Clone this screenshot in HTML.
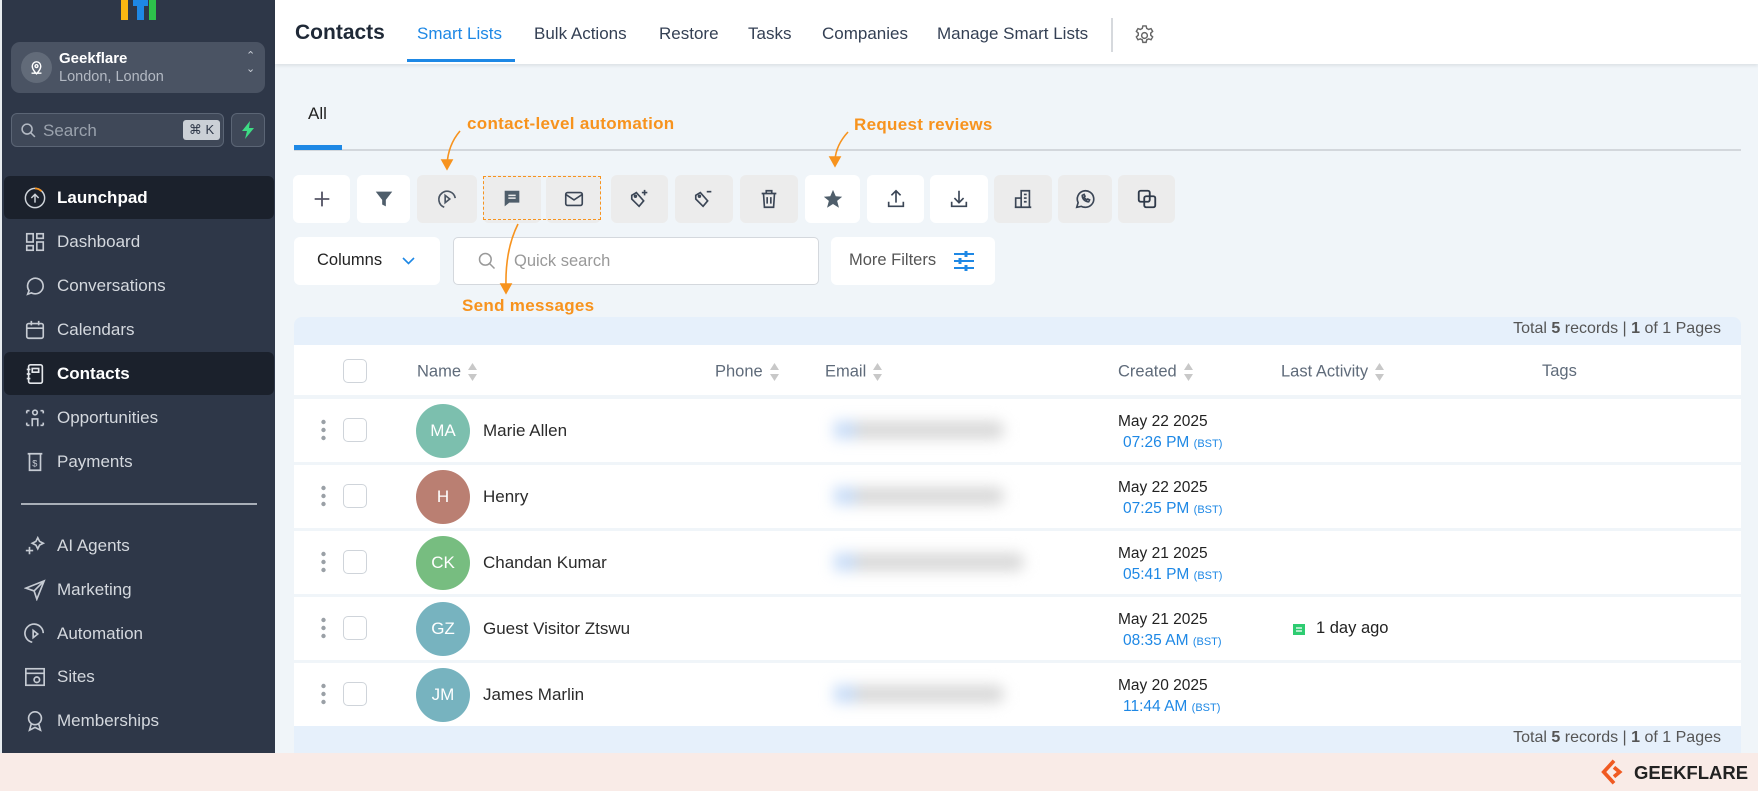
<!DOCTYPE html>
<html><head><meta charset="utf-8"><style>
*{box-sizing:border-box;margin:0;padding:0}
body{width:1758px;height:791px;overflow:hidden;background:#f0f5f9;font-family:"Liberation Sans",sans-serif;position:relative}
.a{position:absolute}
.sb{left:0;top:0;width:275px;height:753px;background:#2e3748;border-left:2px solid #e8ecf0}
.nav{position:absolute;left:2px;width:270px;height:43px;display:flex;align-items:center;color:#d4d8de;font-size:17px}
.nav svg{position:absolute;left:20px;width:22px;height:22px}
.nav span{position:absolute;left:53px}
.nav.act{background:#1b212c;border-radius:6px;color:#fff}
.hdr{left:275px;top:0;width:1483px;height:64px;background:#fff;box-shadow:0 2px 3px rgba(0,0,0,.08)}
.tab{position:absolute;top:24px;font-size:17px;color:#344054}
.btn{position:absolute;top:175px;height:48px;border-radius:6px;background:#ececec;display:flex;align-items:center;justify-content:center}
.btn.w{background:#fff}
.btn svg{width:22px;height:22px}
.ann{position:absolute;color:#f7931e;font-weight:bold;font-size:17px;letter-spacing:.3px}
.row{position:absolute;left:294px;width:1447px;height:63px;background:#fff}
.row .dots{position:absolute;left:27px;top:20px;width:5px;height:22px}
.cb{position:absolute;width:24px;height:24px;border:1.5px solid #cfd4da;border-radius:5px;background:#fff}
.av{position:absolute;left:122px;top:5px;width:54px;height:54px;border-radius:50%;color:#fff;font-size:17px;display:flex;align-items:center;justify-content:center}
.nm{position:absolute;left:189px;top:22px;font-size:17px;color:#2b2b2b}
.em{position:absolute;left:540px;top:22px;width:170px;height:18px;background:#d8d8d8;filter:blur(7px);border-radius:8px}
.em:before{content:"";position:absolute;left:0;top:0;width:22px;height:18px;background:#c8dcf7}
.dt{position:absolute;left:824px;top:12px;font-size:15.5px;color:#222;line-height:21px}
.dt b{font-weight:normal;color:#1e88e5;padding-left:5px}
.dt i{font-style:normal;font-size:11px;color:#1e88e5}
.th{position:absolute;top:362px;font-size:16.5px;color:#5f6b7a}
.sort{display:inline-block;vertical-align:middle;margin-left:6px;width:11px;height:20px}
</style></head><body>

<div class="a sb">
 <div class="a" style="left:119px;top:0;width:7px;height:20px;background:#f9b712"></div>
 <div class="a" style="left:131px;top:0;width:15px;height:6px;background:#1e88e5"></div>
 <div class="a" style="left:135px;top:0;width:7px;height:20px;background:#1e88e5"></div>
 <div class="a" style="left:147px;top:0;width:7px;height:20px;background:#2dc24b"></div>
 <div class="a" style="left:9px;top:42px;width:254px;height:51px;background:#4a5363;border-radius:9px">
  <div class="a" style="left:10px;top:10px;width:31px;height:31px;border-radius:50%;background:#626b79"></div>
  <svg class="a" style="left:17px;top:17px" width="17" height="17" viewBox="0 0 24 24" fill="none" stroke="#fff" stroke-width="2"><path d="M12 21s-6-6-6-11a6 6 0 0112 0c0 5-6 11-6 11z"/><circle cx="12" cy="10" r="2"/><path d="M5 20h14"/></svg>
  <div class="a" style="left:48px;top:8px;color:#fff;font-size:15px;font-weight:bold">Geekflare</div>
  <div class="a" style="left:48px;top:27px;color:#b3b9c3;font-size:14.5px">London, London</div>
  <div class="a" style="left:235px;top:8px;color:#c9ced6;font-size:11px;line-height:13px">&#8963;<br>&#8964;</div>
 </div>
 <div class="a" style="left:9px;top:113px;width:213px;height:34px;background:#3f4858;border:1px solid #5b6575;border-radius:6px">
  <svg class="a" style="left:8px;top:8px" width="17" height="17" viewBox="0 0 24 24" fill="none" stroke="#b3b9c3" stroke-width="2.2"><circle cx="10" cy="10" r="7"/><path d="M15 15l6 6"/></svg>
  <div class="a" style="left:31px;top:7px;color:#9aa2ad;font-size:17px">Search</div>
  <div class="a" style="left:171px;top:6px;width:37px;height:20px;background:#cbd0d6;border-radius:3px;color:#2e3748;font-size:13px;text-align:center;line-height:20px">⌘ K</div>
 </div>
 <div class="a" style="left:229px;top:113px;width:34px;height:34px;background:#3f4858;border:1px solid #5b6575;border-radius:6px">
  <svg class="a" style="left:8px;top:7px" width="16" height="18" viewBox="0 0 16 18"><path d="M10 0L2 10h5l-2 8 9-11H9z" fill="#3ddc84"/></svg>
 </div>
 <div class="nav act" style="top:176px"><svg viewBox="0 0 24 24" fill="none" stroke="#cfd4da" stroke-width="1.6"><circle cx="12" cy="12" r="10.5"/><path d="M12 1.5a10.5 10.5 0 017 3" stroke="#f7931e" stroke-width="2"/><path d="M12 17v-8M8 12l4-4 4 4"/></svg><span style="font-weight:bold">Launchpad</span></div>
 <div class="nav" style="top:220px"><svg viewBox="0 0 24 24" fill="none" stroke="#c6cbd3" stroke-width="1.8"><rect x="3" y="3" width="7" height="9"/><rect x="14" y="3" width="7" height="5"/><rect x="14" y="12" width="7" height="9"/><rect x="3" y="16" width="7" height="5"/></svg><span>Dashboard</span></div>
 <div class="nav" style="top:264px"><svg viewBox="0 0 24 24" fill="none" stroke="#c6cbd3" stroke-width="1.8"><path d="M4 21l1.5-4A8.5 8.5 0 1112 20.5a8.5 8.5 0 01-4-1z"/></svg><span>Conversations</span></div>
 <div class="nav" style="top:308px"><svg viewBox="0 0 24 24" fill="none" stroke="#c6cbd3" stroke-width="1.8"><rect x="3" y="5" width="18" height="16" rx="2"/><path d="M3 10h18M8 2v5M16 2v5"/></svg><span>Calendars</span></div>
 <div class="nav act" style="top:352px"><svg viewBox="0 0 24 24" fill="none" stroke="#e4e7eb" stroke-width="1.8"><rect x="5" y="2" width="15" height="20" rx="2"/><rect x="9" y="6" width="7" height="4"/><path d="M3 7h4M3 12h4M3 17h4"/></svg><span style="font-weight:bold">Contacts</span></div>
 <div class="nav" style="top:396px"><svg viewBox="0 0 24 24" fill="none" stroke="#c6cbd3" stroke-width="1.8"><circle cx="12" cy="6" r="2.5"/><path d="M9 21v-8h6v8M3 4h3M3 4v3M21 4h-3M21 4v3M3 20h3M3 20v-3M21 20h-3M21 20v-3"/></svg><span>Opportunities</span></div>
 <div class="nav" style="top:440px"><svg viewBox="0 0 24 24" fill="none" stroke="#c6cbd3" stroke-width="1.8"><path d="M4 3h16M6 3v18h12V3"/><text x="9" y="17" font-size="10" fill="#c6cbd3" stroke="none">$</text></svg><span>Payments</span></div>
 <div class="a" style="left:19px;top:503px;width:236px;height:1.5px;background:#a9afb8"></div>
 <div class="nav" style="top:524px"><svg viewBox="0 0 24 24" fill="none" stroke="#c6cbd3" stroke-width="1.8"><path d="M2 17h8M6 13v8M15 3l2 4 4 2-4 2-2 4-2-4-4-2 4-2z"/></svg><span>AI Agents</span></div>
 <div class="nav" style="top:568px"><svg viewBox="0 0 24 24" fill="none" stroke="#c6cbd3" stroke-width="1.8"><path d="M22 2L2 10l9 3 3 9z M11 13L22 2"/></svg><span>Marketing</span></div>
 <div class="nav" style="top:612px"><svg viewBox="0 0 24 24" fill="none" stroke="#c6cbd3" stroke-width="1.8"><path d="M9 21A10 10 0 1121 11"/><path d="M10 8l5 4-5 4z"/></svg><span>Automation</span></div>
 <div class="nav" style="top:655px"><svg viewBox="0 0 24 24" fill="none" stroke="#c6cbd3" stroke-width="1.8"><rect x="2" y="3" width="20" height="18"/><path d="M2 8h20"/><circle cx="14" cy="15" r="3"/></svg><span>Sites</span></div>
 <div class="nav" style="top:699px"><svg viewBox="0 0 24 24" fill="none" stroke="#c6cbd3" stroke-width="1.8"><circle cx="12" cy="9" r="7"/><path d="M8 15l-2 7 6-3 6 3-2-7"/></svg><span>Memberships</span></div>
</div>

<div class="a hdr">
 <div class="a" style="left:20px;top:21px;font-size:21px;color:#1f2937;font-weight:bold">Contacts</div>
 <div class="tab" style="left:142px;color:#1e88e5">Smart Lists</div>
 <div class="a" style="left:132px;top:59px;width:108px;height:3px;background:#1e88e5"></div>
 <div class="tab" style="left:259px">Bulk Actions</div>
 <div class="tab" style="left:384px">Restore</div>
 <div class="tab" style="left:473px">Tasks</div>
 <div class="tab" style="left:547px">Companies</div>
 <div class="tab" style="left:662px">Manage Smart Lists</div>
 <div class="a" style="left:836px;top:18px;width:2px;height:34px;background:#d6d9dd"></div>
 <svg class="a" style="left:858px;top:24px" width="23" height="23" viewBox="0 0 24 24" fill="none" stroke="#666" stroke-width="1.5"><circle cx="12" cy="12" r="3"/><path d="M10.3 2h3.4l.6 2.6 2 1.1 2.5-.9 1.7 2.9-2 1.8v2.2l2 1.8-1.7 2.9-2.5-.9-2 1.1-.6 2.6h-3.4l-.6-2.6-2-1.1-2.5.9-1.7-2.9 2-1.8V9.5l-2-1.8L5.2 4.8l2.5.9 2-1.1z"/></svg>
</div>

<div class="a" style="left:308px;top:104px;font-size:17px;color:#222">All</div>
<div class="a" style="left:294px;top:149px;width:1447px;height:1.5px;background:#d3d7dc"></div>
<div class="a" style="left:294px;top:145px;width:48px;height:5px;background:#1e88e5"></div>

<div class="btn w" style="left:293px;width:57px"><svg viewBox="0 0 24 24" fill="none" stroke="#556" stroke-width="2"><path d="M12 4v16M4 12h16"/></svg></div>
<div class="btn w" style="left:357px;width:53px"><svg viewBox="0 0 24 24"><path d="M3 4h18l-7 9v7l-4-2v-5z" fill="#4f5e6b"/></svg></div>
<div class="btn" style="left:417px;width:60px"><svg viewBox="0 0 24 24" fill="none" stroke="#4a5563" stroke-width="1.8"><path d="M9 21A9 9 0 1121 11"/><path d="M10 8l5 4-5 4z"/></svg></div>
<div class="btn" style="left:483px;width:58px"><svg viewBox="0 0 24 24"><path d="M4 3h16v13H9l-5 4z" fill="#4f5e6b"/><path d="M8 8h8M8 11h8" stroke="#ececec" stroke-width="1.6"/></svg></div>
<div class="btn" style="left:546px;width:55px"><svg viewBox="0 0 24 24" fill="none" stroke="#3b4656" stroke-width="1.8"><rect x="3" y="5" width="18" height="14" rx="2"/><path d="M3 7l9 6 9-6"/></svg></div>
<div class="a" style="left:483px;top:176px;width:118px;height:44px;border:1.5px dashed #f7931e"></div>
<div class="btn" style="left:611px;width:57px"><svg viewBox="0 0 24 24" fill="none" stroke="#3b4656" stroke-width="1.8"><path d="M3 8l5-3 8 9-5 6-8-8z"/><circle cx="7" cy="9" r="1"/><path d="M17 2v6M14 5h6"/></svg></div>
<div class="btn" style="left:675px;width:58px"><svg viewBox="0 0 24 24" fill="none" stroke="#3b4656" stroke-width="1.8"><path d="M3 8l5-3 8 9-5 6-8-8z"/><circle cx="7" cy="9" r="1"/><path d="M15 4h5"/></svg></div>
<div class="btn" style="left:740px;width:58px"><svg viewBox="0 0 24 24" fill="none" stroke="#3b4656" stroke-width="1.8"><path d="M4 6h16M9 6V3h6v3M6 6l1 15h10l1-15M10 10v7M14 10v7"/></svg></div>
<div class="btn w" style="left:805px;width:55px"><svg viewBox="0 0 24 24"><path d="M12 2l3 7 7 .5-5.5 4.5 2 7.5-6.5-4-6.5 4 2-7.5L2 9.5 9 9z" fill="#4f5e6b"/></svg></div>
<div class="btn w" style="left:867px;width:57px"><svg viewBox="0 0 24 24" fill="none" stroke="#3b4656" stroke-width="1.8"><path d="M12 16V3M7 8l5-5 5 5M4 15v5h16v-5"/></svg></div>
<div class="btn w" style="left:930px;width:58px"><svg viewBox="0 0 24 24" fill="none" stroke="#3b4656" stroke-width="1.8"><path d="M12 3v13M7 11l5 5 5-5M4 15v5h16v-5"/></svg></div>
<div class="btn" style="left:994px;width:58px"><svg viewBox="0 0 24 24" fill="none" stroke="#3b4656" stroke-width="1.8"><path d="M3 21h18M4 21V11h6M10 21V3h9v18M13 7h3M13 11h3M13 15h3"/></svg></div>
<div class="btn" style="left:1058px;width:54px"><svg viewBox="0 0 24 24" fill="none" stroke="#3b4656" stroke-width="1.8"><path d="M3 21l1.5-5A9 9 0 1112 21a9 9 0 01-4-1z"/><path d="M9 8c0 4 3 7 7 7l1-2-2-1-1 1c-1-.5-2.5-2-3-3l1-1-1-2z"/></svg></div>
<div class="btn" style="left:1118px;width:57px"><svg viewBox="0 0 24 24" fill="none" stroke="#2f3a4a" stroke-width="2"><rect x="3" y="3" width="12" height="12" rx="2"/><rect x="9" y="9" width="12" height="12" rx="2"/></svg></div>

<div class="a" style="left:294px;top:237px;width:146px;height:48px;background:#fff;border-radius:6px">
 <div class="a" style="left:23px;top:14px;font-size:16.5px;color:#222">Columns</div>
 <svg class="a" style="left:108px;top:19px" width="13" height="10" viewBox="0 0 13 10" fill="none" stroke="#1e88e5" stroke-width="1.6"><path d="M1 2l5.5 5.5L12 2"/></svg>
</div>
<div class="a" style="left:453px;top:237px;width:366px;height:48px;background:#fff;border:1.5px solid #d4d8dd;border-radius:5px">
 <svg class="a" style="left:23px;top:13px" width="20" height="20" viewBox="0 0 24 24" fill="none" stroke="#999" stroke-width="1.8"><circle cx="10" cy="10" r="7"/><path d="M15 15l6 6"/></svg>
 <div class="a" style="left:60px;top:14px;font-size:16.5px;color:#999">Quick search</div>
</div>
<div class="a" style="left:831px;top:237px;width:164px;height:48px;background:#fff;border-radius:6px">
 <div class="a" style="left:18px;top:14px;font-size:16.5px;color:#555">More Filters</div>
 <svg class="a" style="left:122px;top:14px" width="22" height="20" viewBox="0 0 22 20" stroke="#1e88e5" stroke-width="2"><path d="M1 3h20M1 10h20M1 17h20"/><path d="M13 0v6M7 7v6M13 14v6" stroke-width="3"/></svg>
</div>

<div class="ann" style="left:467px;top:114px">contact-level automation</div>
<div class="ann" style="left:854px;top:115px">Request reviews</div>
<div class="ann" style="left:462px;top:296px">Send messages</div>
<svg class="a" style="left:0;top:0" width="1758" height="791" fill="none" stroke="#f7931e" stroke-width="1.6">
 <path d="M460 131 Q448 145 447 165"/><path d="M442 160l5 9 5-9z" fill="#f7931e"/>
 <path d="M848 132 Q836 145 835 160"/><path d="M830 157l5 9 5-9z" fill="#f7931e"/>
 <path d="M518 224 Q505 250 506 287"/><path d="M501 284l5 9 5-9z" fill="#f7931e"/>
</svg>

<div class="a" style="left:294px;top:317px;width:1447px;height:28px;background:#e6f0fb;border-radius:8px 8px 0 0"></div>
<div class="a" style="left:1400px;top:320px;width:321px;text-align:right;font-size:16px;color:#555">Total <b>5</b> records | <b>1</b> of 1 Pages</div>
<div class="a" style="left:294px;top:345px;width:1447px;height:50px;background:#fff"></div>
<div class="cb" style="left:343px;top:359px"></div>
<svg width="0" height="0" style="position:absolute"><defs><g id="s"><path d="M5.5 1L10 8H1z" fill="#c8c8c8"/><path d="M5.5 19L10 12H1z" fill="#c8c8c8"/></g></defs></svg>
<div class="th" style="left:417px">Name<svg class="sort" viewBox="0 0 11 20"><use href="#s"/></svg></div>
<div class="th" style="left:715px">Phone<svg class="sort" viewBox="0 0 11 20"><use href="#s"/></svg></div>
<div class="th" style="left:825px">Email<svg class="sort" viewBox="0 0 11 20"><use href="#s"/></svg></div>
<div class="th" style="left:1118px">Created<svg class="sort" viewBox="0 0 11 20"><use href="#s"/></svg></div>
<div class="th" style="left:1281px">Last Activity<svg class="sort" viewBox="0 0 11 20"><use href="#s"/></svg></div>
<div class="th" style="left:1542px">Tags</div>

<div class="row" style="top:399px"><svg class="dots" viewBox="0 0 5 22" fill="#9aa0a6"><circle cx="2.5" cy="3" r="2.2"/><circle cx="2.5" cy="11" r="2.2"/><circle cx="2.5" cy="19" r="2.2"/></svg><div class="cb" style="left:49px;top:19px"></div><div class="av" style="background:#7cbfae">MA</div><div class="nm">Marie Allen</div><div class="em"></div><div class="dt">May 22 2025<br><b>07:26 PM</b> <i>(BST)</i></div></div>
<div class="row" style="top:465px"><svg class="dots" viewBox="0 0 5 22" fill="#9aa0a6"><circle cx="2.5" cy="3" r="2.2"/><circle cx="2.5" cy="11" r="2.2"/><circle cx="2.5" cy="19" r="2.2"/></svg><div class="cb" style="left:49px;top:19px"></div><div class="av" style="background:#ba7f72">H</div><div class="nm">Henry</div><div class="em"></div><div class="dt">May 22 2025<br><b>07:25 PM</b> <i>(BST)</i></div></div>
<div class="row" style="top:531px"><svg class="dots" viewBox="0 0 5 22" fill="#9aa0a6"><circle cx="2.5" cy="3" r="2.2"/><circle cx="2.5" cy="11" r="2.2"/><circle cx="2.5" cy="19" r="2.2"/></svg><div class="cb" style="left:49px;top:19px"></div><div class="av" style="background:#77bd80">CK</div><div class="nm">Chandan Kumar</div><div class="em" style="width:190px"></div><div class="dt">May 21 2025<br><b>05:41 PM</b> <i>(BST)</i></div></div>
<div class="row" style="top:597px"><svg class="dots" viewBox="0 0 5 22" fill="#9aa0a6"><circle cx="2.5" cy="3" r="2.2"/><circle cx="2.5" cy="11" r="2.2"/><circle cx="2.5" cy="19" r="2.2"/></svg><div class="cb" style="left:49px;top:19px"></div><div class="av" style="background:#77b3bf">GZ</div><div class="nm">Guest Visitor Ztswu</div><div class="dt">May 21 2025<br><b>08:35 AM</b> <i>(BST)</i></div>
 <svg class="a" style="left:999px;top:27px" width="12" height="11" viewBox="0 0 12 11"><rect width="12" height="11" fill="#2ecc71"/><path d="M3 4h6M3 7h6" stroke="#fff" stroke-width="1.2"/></svg>
 <div class="a" style="left:1022px;top:22px;font-size:16.5px;color:#222">1 day ago</div></div>
<div class="row" style="top:663px"><svg class="dots" viewBox="0 0 5 22" fill="#9aa0a6"><circle cx="2.5" cy="3" r="2.2"/><circle cx="2.5" cy="11" r="2.2"/><circle cx="2.5" cy="19" r="2.2"/></svg><div class="cb" style="left:49px;top:19px"></div><div class="av" style="background:#77b3bf">JM</div><div class="nm">James Marlin</div><div class="em"></div><div class="dt">May 20 2025<br><b>11:44 AM</b> <i>(BST)</i></div></div>

<div class="a" style="left:294px;top:726px;width:1447px;height:27px;background:#e6f0fb"></div>
<div class="a" style="left:1400px;top:729px;width:321px;text-align:right;font-size:16px;color:#555">Total <b>5</b> records | <b>1</b> of 1 Pages</div>

<div class="a" style="left:0;top:753px;width:1758px;height:38px;background:#f9ebe7"></div>
<svg class="a" style="left:1600px;top:758px" width="28" height="28" viewBox="0 0 30 30" fill="none" stroke="#f05a22" stroke-width="4"><path d="M15 3L4 15l11 12M15 10l6 5-6 5"/></svg>
<div class="a" style="left:1634px;top:762px;font-size:18.5px;font-weight:bold;color:#222;letter-spacing:0">GEEKFLARE</div>
</body></html>
